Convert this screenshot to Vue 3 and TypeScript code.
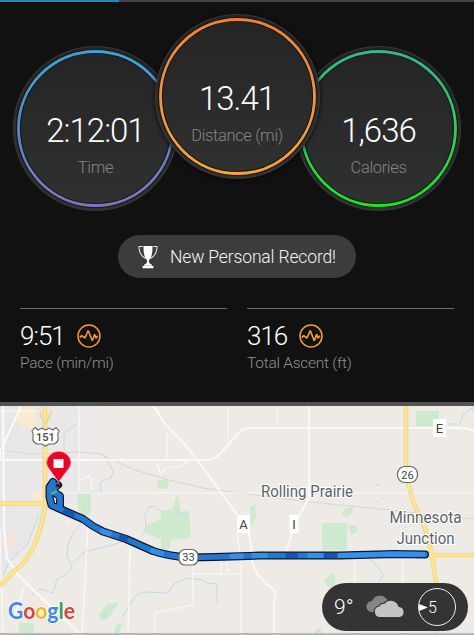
<template>
  <div class="activity">
    <div class="progress">
      <div class="progress-bar" :style="{ width: progress + '%' }" />
    </div>

    <section class="summary">
      <div class="dials">
        <div v-for="dial in dials" :key="dial.id" class="dial" :class="'dial-' + dial.id">
          <svg class="dial-ring" viewBox="0 0 165 165">
            <defs>
              <linearGradient :id="'ring-' + dial.id" x1="0" y1="0" x2="0" y2="1">
                <stop offset="0" :stop-color="dial.from" />
                <stop v-if="dial.mid" offset="0.5" :stop-color="dial.mid" />
                <stop offset="1" :stop-color="dial.to" />
              </linearGradient>
            </defs>
            <circle cx="82.5" cy="82.5" r="77" fill="none" stroke="#171717" stroke-width="5" />
            <circle cx="82.5" cy="82.5" r="77" fill="none" :stroke="`url(#ring-${dial.id})`" stroke-width="2.8" />
          </svg>
          <div class="dial-value">{{ dial.value }}</div>
          <div class="dial-label">{{ dial.label }}</div>
        </div>
      </div>

      <div class="record">
        <svg class="trophy" viewBox="0 0 20 24">
          <path d="M5 1.5H1Q1 10 7.5 13.5M15 1.5h4Q19 10 12.5 13.5" fill="none" stroke="#ddd" stroke-width="1.1" />
          <path d="M5.5 1h9q.2 10.500-2.800 13.300-1 .8-.8 2.500.2 2 3.100 3v1H6v-1q2.900-1 3.100-3 .2-1.700-.8-2.500Q5.300 11.500 5.500 1z" fill="#fff" />
          <rect x="4.500" y="21" width="11" height="2.200" rx=".6" fill="#fff" />
        </svg>
        <span>New Personal Record!</span>
      </div>

      <div class="stats">
        <div v-for="stat in stats" :key="stat.label" class="stat">
          <div class="stat-row">
            <span class="stat-value">{{ stat.value }}</span>
            <svg class="pulse" viewBox="0 0 24 24" fill="none" :stroke="stat.color">
              <circle cx="12" cy="12" r="11" stroke-width="1.500" />
              <path d="M2.800 13.500 4.700 11.600 8 14 11.200 6.500 15.300 16.800 17.700 10.200 19 14.200 20.800 11.800" stroke-width="1.600" stroke-linejoin="bevel" />
            </svg>
          </div>
          <div class="stat-label">{{ stat.label }}</div>
        </div>
      </div>
    </section>

    <section class="map">
      <svg class="map-canvas" viewBox="0 406 474 229">
        <defs>
          <linearGradient id="town" x1="0" x2="1">
            <stop offset="0" stop-color="#e9e6ea" />
            <stop offset="0.6" stop-color="#ebe8e9" />
            <stop offset="1" stop-color="#eeebe7" />
          </linearGradient>
        </defs>
        <rect y="406" width="474" height="229" fill="#eeebe7" />
        <path d="M0 406H120V495L75 500 45 515 30 540 0 575z" fill="url(#town)" />
        <path d="M18 409 34 406 36 425 27 430 16 422z" fill="#f7ecd0" />
        <path d="M33 491h9v10h-9z" fill="#f8edca" />
        <path d="M5 532 16 533 14 545 2 548z" fill="#f6e2dc" />

        <g fill="#cfe9cf">
          <path d="M77 493h14v20l-7 4-6-8z" />
          <path d="M176 497l2-1 3 16 8-2 2 28-20 2-2 9h-8v-10l-16-6 1-8 15-6v-8l11-2z" />
          <path d="M157 480h9l3 3-2 6-9-1z" />
          <path d="M250 507l5-3 1 14-5 10z" />
          <path d="M322 523h25v27h-25z" />
          <path d="M341 515l5-7h7v5l-6 4zM348 526l7-1 3 6-7 4z" />
          <path d="M416 411h23v15h-23z" />
          <path d="M470 409l4-3v7z" />
          <path d="M99 615l8-11 12-2-9 14-8 6zM113 635l4-12 5 1-3 11zM19 623h15v12H19z" />
          <path d="M324 580l10-8 2 14-8 1zM314 632l7-5v8h-7z" />
        </g>

        <!-- streams -->
        <g fill="none" stroke="#c3d8e9" stroke-width="1" stroke-linejoin="round">
          <path d="M78 423 64 433V450M102 453l5 7 6 11-2 7-10 3-1 6 2 5-12 1" />
          <path d="M142 535l4-5-1-16 4-7 6-1 4 4 5 3M178 512l10 2" />
          <path d="M39 515 27 545 10 561 2 577M85 507v12l-12 14-5 11-1 12 5 11-8 9-7 3-4 14-13-4-8 6" />
          <path d="M73 563l11-11 25-6 22-7" />
          <path d="M123 617l8-15q5-9 14-10l23 1 6-9 14-6 14 2 5 3 10 1v19" />
          <path d="M370 559l8 8 5 8-4 8M448 424h12l3-9 10-8M375 486l5-2M376 501h2M381 497l2 2" />
        </g>

        <!-- railway -->
        <path d="M2 450 30 454 79 452 100 454 115 461 135 470 169 480 203 488 240 493 310 502 380 509 474 519" fill="none" stroke="#d8d6d4" stroke-width="1" />

        <g fill="none" stroke="#faf9f7">
          <g stroke-width="1.200">
            <path d="M0 411H40M79 406V492M46 493H300M340 493H474M167 460V432M228 406V440M277 406V426" />
            <path d="M68 526V520M88 526 82 635M130 545 128 635M237 532 241 560V635M155 635V613L193 605V565M193 574H240M221 563V574M226 563l2 9M355 560V635M403 560V635M157 462l3 12 6-6 16-2 5-5M80 480l8-4 4 3-1 11" />
            <path d="M0 529 3 635M25 585 14 618" />
          </g>
          <g stroke-width="2">
            <path d="M0 460H210Q216 458 220 454L236 436Q241 429 248 428H460Q468 428 474 431" />
            <path d="M154 406 164 423 188 448 200 464 238 516 249 532 251 545 252 562Q254 570 260 577T272 588 274 600V635" />
            <path d="M309 406V498L296 521 286 552M21 406 2 448M153 406l7 9M0 448 0 460" />
            <path d="M3 406 4 528 7 558 18 575 45 601 80 634" stroke-width="2.300" />
          </g>
        </g>

        <!-- highways -->
        <g fill="none" stroke-linejoin="round">
          <path :d="highways" stroke="#ebd58a" stroke-width="4.600" />
          <path :d="highways" stroke="#fbe68f" stroke-width="3" />
          <path d="M40 410 41 416 45 424 50 416 51 410" stroke="#eed889" stroke-width="1.800" />
        </g>

        <!-- recorded track -->
        <g fill="none" stroke-linejoin="round">
          <path :d="track" stroke="#08172c" stroke-width="8" stroke-linecap="round" />
          <path :d="track" stroke="#2477d0" stroke-width="5.600" stroke-linecap="round" />
          <path :d="route" stroke="#398ee9" stroke-width="5.200" stroke-dasharray="0 48 12 42 14 66 14 8 16 20 8 12 120 400" />
          <path :d="route" stroke="#1456a9" stroke-width="5.200" stroke-dasharray="0 6 12 50 9 161 12 26 14 400" />
          <path d="M51 494l6-3" stroke="#55a989" stroke-width="3" />
          <path d="M56 485q4 2 5-1" stroke="#431713" stroke-width="3.500" />
        </g>

        <!-- stop marker -->
        <path d="M58.500 482 50 470Q46.500 466 46.500 462.500A12.300 12.300 0 0 1 71 462.500Q71 466 67.500 470z" fill="#f00022" stroke="#f6d9dc" stroke-width=".5" />
        <rect x="53.500" y="459" width="10" height="9" fill="#fff" />

        <!-- road shields -->
        <path d="M35 427.500 38 430 42 428 45.500 430 49 428 53 430 56 427.500 59 431Q57 434 58 437 59 442 54 444H49L45.500 446 42 444H37Q32 442 33 437 34 434 32 431z" fill="#fff" stroke="#666" stroke-width="1.100" />
        <text class="shield" x="45.500" y="440.500">151</text>
        <rect x="179" y="549.500" width="19" height="15.500" rx="6" fill="#fff" stroke="#666" stroke-width="1.200" />
        <text class="shield small" x="188.500" y="561.300">33</text>
        <rect x="397.500" y="466.500" width="20" height="16" rx="7.500" fill="#fff" stroke="#666" stroke-width="1.200" />
        <text class="shield small" x="407.500" y="478.700">26</text>
        <g v-for="road in countyRoads" :key="road.name">
          <rect :x="road.x - road.w / 2" :y="road.y - 9" :width="road.w" height="18" fill="#fff" />
          <text class="county" :x="road.x" :y="road.y + 4.5">{{ road.name }}</text>
        </g>

        <text class="place" x="307" y="497" textLength="92" lengthAdjust="spacingAndGlyphs">Rolling Prairie</text>
        <text class="place" x="425.500" y="523" textLength="72" lengthAdjust="spacingAndGlyphs">Minnesota</text>
        <text class="place" x="425.500" y="544" textLength="58" lengthAdjust="spacingAndGlyphs">Junction</text>

        <text class="google" x="8" y="619" textLength="67" lengthAdjust="spacingAndGlyphs"><tspan fill="#4285f4">G</tspan><tspan fill="#e04335">o</tspan><tspan fill="#f4b90f">o</tspan><tspan fill="#4285f4">g</tspan><tspan fill="#34a056">l</tspan><tspan fill="#e04335">e</tspan></text>
        <rect y="633" width="474" height="2" fill="#b9b7b5" />
      </svg>

      <div class="weather">
        <span class="temp">9°</span>
        <svg class="clouds" viewBox="0 0 40 24">
          <path d="M6 17A5.500 5.500 0 0 1 6 6 8.500 8.500 0 0 1 21 4.500L24 12 12 17z" fill="#858585" />
          <path d="M14 22.500A5.800 5.800 0 0 1 13 11 5 5 0 0 1 18 8.500 8.500 8.500 0 0 1 33 11.500 5.600 5.600 0 0 1 34 22.500z" fill="#c5c5c5" stroke="#343434" stroke-width="1.200" />
        </svg>
        <div class="wind">
          <svg class="wind-arrow" viewBox="0 0 10 8"><path d="M0 0 10 4 0 8z" fill="#fff" /></svg>
          <span>5</span>
        </div>
      </div>
    </section>
  </div>
</template>

<script setup lang="ts">
import { ref } from 'vue';

interface Dial {
  id: string;
  value: string;
  label: string;
  from: string;
  mid?: string;
  to: string;
}

interface Stat {
  value: string;
  label: string;
  color: string;
}

const progress = ref(25);

const dials: Dial[] = [
  { id: 'time', value: '2:12:01', label: 'Time', from: '#36a5dc', mid: '#5488ca', to: '#8571bd' },
  { id: 'distance', value: '13.41', label: 'Distance (mi)', from: '#f28232', to: '#f8a437' },
  { id: 'calories', value: '1,636', label: 'Calories', from: '#36b58b', mid: '#2bcf5d', to: '#17e81d' },
];

const stats: Stat[] = [
  { value: '9:51', label: 'Pace (min/mi)', color: '#f5962b' },
  { value: '316', label: 'Total Ascent (ft)', color: '#efa51f' },
];

const countyRoads = [
  { name: 'A', x: 243.5, y: 524, w: 13 },
  { name: 'I', x: 294, y: 524, w: 9 },
  { name: 'E', x: 439.5, y: 428, w: 13 },
];

const highways = 'M45 406V505Q44 520 36 541T13 572L0 586M0 503.5H46M406 406V474L413 502 425 528 432 555 437 588V635M426 555H474';

// main leg of the run, and the small loop around the start
const route = 'M58 508 83 519 Q93 527 103 531.5 L126 539 153 551 Q168 556 188 557.5 L215 557 260 555.5 340 555.5 395 554 425 554.5';
const track = route + 'M53 482 49.5 487V497L51.5 505 58 508 60 506V496L55 493 53 489 58 485';
</script>

<style>
body {
  background: #111;
}
</style>

<style scoped>
.activity {
  width: 474px;
  height: 635px;
  display: flex;
  flex-direction: column;
  overflow: hidden;
  background: #111;
  font-family: Roboto, 'Noto Sans', sans-serif;
  font-weight: 300;
}

.progress {
  height: 2px;
  flex: none;
  background: #444;
}

.progress-bar {
  height: 100%;
  background: #2187bd;
}

.summary {
  height: 400px;
  flex: none;
  display: flex;
  flex-direction: column;
  align-items: center;
  border-bottom: 4px solid #535353;
}

.dials {
  display: flex;
  align-items: flex-start;
  padding-top: 44px;
}

.dial {
  position: relative;
  box-sizing: border-box;
  width: 165px;
  height: 165px;
  padding-top: 65px;
  border-radius: 50%;
  border: 1.5px solid #383838;
  background: linear-gradient(#242424, #303131);
  text-align: center;
}

.dial-distance {
  z-index: 1;
  margin: -32px -23.5px 0;
  box-shadow: 0 1px 4px #080808;
}

.dial-ring {
  position: absolute;
  top: -1px;
  left: -1px;
  width: 165px;
  height: 165px;
}

.dial-value {
  position: relative;
  color: #fff;
  font-size: 33px;
  line-height: 38px;
  letter-spacing: -1px;
}

.dial-label {
  position: relative;
  margin-top: 7px;
  color: #858585;
  font-size: 16.5px;
  line-height: 22px;
  letter-spacing: -0.35px;
}

.record {
  box-sizing: border-box;
  width: 238px;
  height: 43px;
  margin-top: 24px;
  padding-left: 20px;
  display: flex;
  align-items: center;
  gap: 12px;
  border-radius: 22px;
  background: #3c3c3c;
  color: #f4f4f4;
  font-size: 17.5px;
  letter-spacing: -0.15px;
  white-space: nowrap;
}

.trophy {
  width: 20px;
  height: 24px;
  flex: none;
}

.stats {
  display: flex;
  gap: 20px;
  margin-top: 30px;
}

.stat {
  width: 207px;
  border-top: 1px solid #6a6a6a;
}

.stat-row {
  display: flex;
  align-items: center;
  gap: 12px;
  height: 30px;
  margin-top: 12px;
}

.stat-value {
  color: #fff;
  font-size: 26px;
  letter-spacing: -1px;
}

.pulse {
  width: 24px;
  height: 24px;
}

.stat-label {
  margin-top: 1px;
  color: #909090;
  font-size: 15.5px;
  line-height: 22px;
  letter-spacing: -0.25px;
}

.map {
  position: relative;
  height: 229px;
  flex: none;
}

.map-canvas {
  display: block;
  width: 474px;
  height: 229px;
}

.map-canvas text {
  text-anchor: middle;
}

.shield {
  fill: #444;
  font-size: 11px;
  font-weight: 500;
}

.shield.small {
  font-size: 11px;
  font-weight: 400;
}

.county {
  fill: #444;
  font-size: 13px;
  font-weight: 400;
}

.place {
  fill: #5c5f66;
  stroke: #fff;
  stroke-width: 2px;
  paint-order: stroke;
  font-size: 16.5px;
  font-weight: 400;
}

.map-canvas .google {
  text-anchor: start;
  font-family: Lato, sans-serif;
  font-size: 22px;
  font-weight: 700;
  stroke: #fff;
  stroke-width: 1.5px;
  paint-order: stroke;
}

.weather {
  position: absolute;
  left: 322px;
  top: 177px;
  box-sizing: border-box;
  width: 146px;
  height: 48px;
  padding: 0 12px;
  display: flex;
  align-items: center;
  border-radius: 24px;
  background: #343434;
  color: #fff;
}

.temp {
  width: 32px;
  font-size: 21px;
}

.clouds {
  width: 40px;
  height: 24px;
}

.wind {
  box-sizing: border-box;
  width: 38px;
  height: 38px;
  margin-left: auto;
  display: flex;
  align-items: center;
  border: 1.5px solid #eee;
  border-radius: 50%;
  font-size: 16px;
}

.wind-arrow {
  width: 9px;
  height: 7px;
}
</style>
